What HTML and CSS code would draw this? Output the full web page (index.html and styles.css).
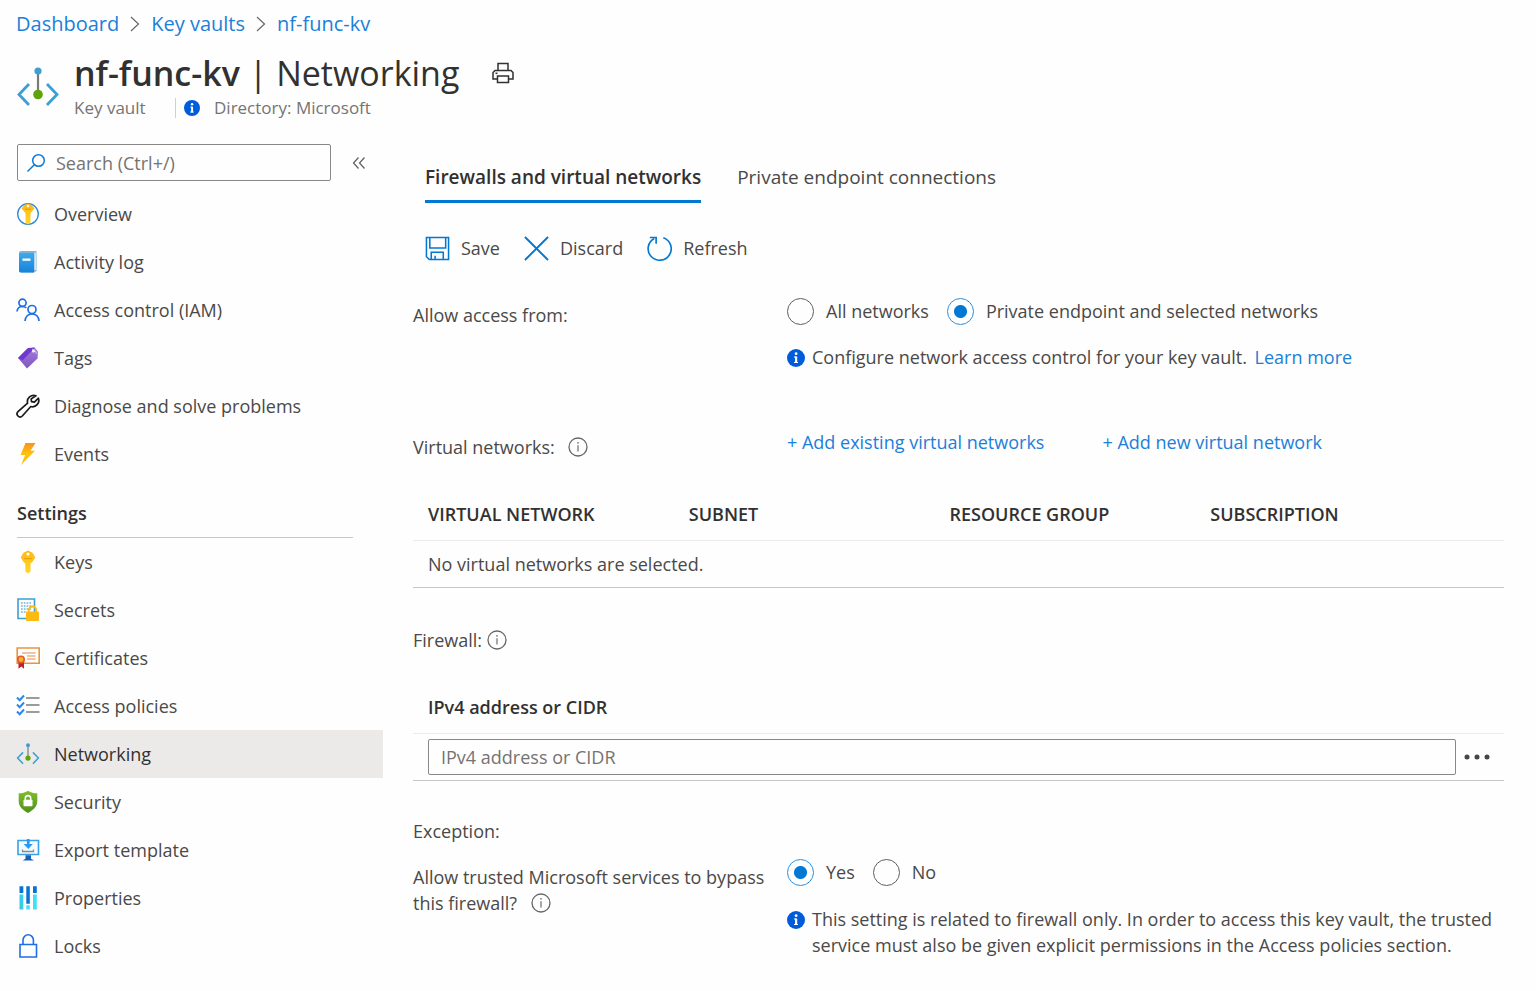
FILE: index.html
```html
<!DOCTYPE html>
<html lang="en">
<head>
    <meta charset="UTF-8">
    <meta name="viewport" content="width=device-width, initial-scale=1.0">
    <title>nf-func-kv | Networking</title>
    <link rel="stylesheet" href="styles.css">
</head>
<body>
    <!-- Shared icons -->
    <svg class="sprite" aria-hidden="true">
        <defs>
            <linearGradient id="gold" x1="0" y1="0" x2="0" y2="1">
                <stop offset="0" stop-color="#ffb60f"/>
                <stop offset="1" stop-color="#ffd92b"/>
            </linearGradient>
            <linearGradient id="book" x1="0" y1="0" x2="0" y2="1">
                <stop offset="0" stop-color="#3fa9ee"/>
                <stop offset="1" stop-color="#1583d8"/>
            </linearGradient>
            <linearGradient id="tag" x1="0" y1="0" x2="0" y2="1">
                <stop offset="0" stop-color="#a67ae0"/>
                <stop offset="1" stop-color="#7f56bd"/>
            </linearGradient>
            <linearGradient id="bolt" x1="0" y1="0" x2="0" y2="1">
                <stop offset="0" stop-color="#f7931e"/>
                <stop offset="0.5" stop-color="#ffc20e"/>
                <stop offset="1" stop-color="#ffb81c"/>
            </linearGradient>
            <linearGradient id="shield" x1="0" y1="0" x2="0" y2="1">
                <stop offset="0" stop-color="#7fbf2a"/>
                <stop offset="1" stop-color="#4f8f1c"/>
            </linearGradient>
        </defs>
        <symbol id="i-net" viewBox="0 0 44 42">
            <path d="M13 18 3 28.500 13 39M31 18 41 28.500 31 39" fill="none" stroke="#3e9fd3" stroke-width="2.800"/>
            <path d="M22 6v20" stroke="#7a7a7a" stroke-width="2.200"/>
            <circle cx="22" cy="5" r="3.600" fill="#3e9fd3"/>
            <circle cx="22" cy="28.500" r="4.800" fill="#5ea30a"/>
        </symbol>
        <symbol id="i-info" viewBox="0 0 18 18">
            <circle cx="9" cy="9" r="9" fill="#015cda"/>
            <path d="M8 7.500h2.200V14H8z" fill="#fff"/>
            <path d="M7 7.500h2v1H7zM7 13h4v1H7z" fill="#fff"/>
            <circle cx="9.100" cy="4.700" r="1.400" fill="#fff"/>
        </symbol>
        <symbol id="i-hint" viewBox="0 0 20 20">
            <circle cx="10" cy="10" r="9" fill="none" stroke="#666" stroke-width="1.300"/>
            <path d="M10 8.300v6.200" stroke="#777" stroke-width="1.300"/>
            <circle cx="10" cy="5.800" r="0.900" fill="#777"/>
        </symbol>
    </svg>

    <header class="page-header">
        <nav class="breadcrumb">
            <a href="#">Dashboard</a>
            <svg class="crumb-arrow" viewBox="0 0 10 16"><path d="M1 1l7.500 7L1 15" fill="none" stroke="#666" stroke-width="1.200"/></svg>
            <a href="#">Key vaults</a>
            <svg class="crumb-arrow" viewBox="0 0 10 16"><path d="M1 1l7.500 7L1 15" fill="none" stroke="#666" stroke-width="1.200"/></svg>
            <a href="#">nf-func-kv</a>
        </nav>
        <div class="title-row">
            <svg class="title-icon"><use href="#i-net"/></svg>
            <div class="title-text">
                <div class="title-line">
                    <h1><strong>nf-func-kv</strong> | Networking</h1>
                    <button class="print-btn" aria-label="Print">
                        <svg viewBox="0 0 24 24" fill="none" stroke="#323130" stroke-width="1.500">
                            <path d="M7 9.500V2.500h10v7M6.500 18H2v-6.500l2-2h16l2 2V18h-4.500M6.500 15h11v6.500h-11z"/>
                            <path d="M4.500 12.300h2"/>
                        </svg>
                    </button>
                </div>
                <div class="subtitle">
                    <span class="kind">Key vault</span>
                    <svg class="info"><use href="#i-info"/></svg>
                    <span>Directory: Microsoft</span>
                </div>
            </div>
        </div>
    </header>

    <div class="layout">
        <aside class="sidebar">
            <div class="search-row">
                <div class="search">
                    <svg viewBox="0 0 20 20" fill="none" stroke="#0f7bd6" stroke-width="1.500">
                        <circle cx="12.500" cy="7.500" r="5.800"/>
                        <path d="M8.300 11.700 1.500 18.500"/>
                    </svg>
                    <input type="text" placeholder="Search (Ctrl+/)" aria-label="Search menu">
                </div>
                <button class="collapse-btn" aria-label="Collapse menu">
                    <svg viewBox="0 0 14 14" fill="none" stroke="#605e5c" stroke-width="1.200"><path d="M6.500 1.500 1.500 7l5 5.500M12.500 1.500 7.500 7l5 5.500"/></svg>
                </button>
            </div>

            <nav>
                <ul class="menu">
                    <li><a href="#">
                        <svg viewBox="0 0 24 24">
                            <circle cx="12" cy="12" r="10.300" fill="#fff" stroke="#2b88d8" stroke-width="1.300"/>
                            <path d="M12 1.500 15.500 3 18.500 6.500 15.500 10 14.500 11v9.500L12 22.500 9.500 20.500V11L8.500 10 5.500 6.500 8.500 3z" fill="url(#gold)"/>
                            <circle cx="12" cy="4" r="1.200" fill="#fff"/>
                            <path d="M9 7.200h6" stroke="#e89a00"/>
                        </svg>Overview</a></li>
                    <li><a href="#">
                        <svg viewBox="0 0 24 24">
                            <path d="M5 1h15.500v20L18 22.500H5a2 2 0 0 1-2-2V3a2 2 0 0 1 2-2z" fill="#7fb4da"/>
                            <path d="M18.500 2.500h1.300V20h-1.300z" fill="#e8f3fa"/>
                            <path d="M4.500 3H18v19.500H5a2 2 0 0 1-2-2V3.500z" fill="url(#book)"/>
                            <path d="M6.500 8.500h8v2.300h-8z" fill="#fff"/>
                        </svg>Activity log</a></li>
                    <li><a href="#">
                        <svg viewBox="0 0 24 24" fill="none" stroke="#1f6fe5" stroke-width="1.700">
                            <circle cx="6.500" cy="4.800" r="3.600"/>
                            <path d="M1 13.500c.3-3 2.500-5 5.500-5 1.500 0 2.800.5 3.800 1.400"/>
                            <circle cx="16" cy="11.500" r="4"/>
                            <path d="M9 23c.5-4.300 3-7 7-7s6.600 2.700 7 7"/>
                        </svg>Access control (IAM)</a></li>
                    <li><a href="#">
                        <svg viewBox="0 0 24 24">
                            <path d="M2 12 11.500 2.500 18.500 1.500l3.500 4-.5 7L11 22.500z" fill="url(#tag)"/>
                            <path d="M2 12 12 2 19 1.500 6.500 14.500z" fill="#7138cf"/>
                            <circle cx="17.500" cy="5" r="1.500" fill="#fff"/>
                            <path d="M16 3.500c2-.5 4.500 1.500 4.200 4.500" fill="none" stroke="#d9c6f2"/>
                        </svg>Tags</a></li>
                    <li><a href="#">
                        <svg viewBox="0 0 24 24" fill="none" stroke="#1b1a19" stroke-width="1.700" stroke-linejoin="round">
                            <path d="M20 1.800a6.300 6.300 0 0 0-8.400 7.400L2 17.700a3 3 0 0 0 4.300 4.300l8.500-9.500a6.300 6.300 0 0 0 7.600-8.300l-4 3.900-2.900-.5-.3-2.700z"/>
                        </svg>Diagnose and solve problems</a></li>
                    <li><a href="#">
                        <svg viewBox="0 0 24 24">
                            <path d="M9.500 1H19.500L14.500 8.700H19L5 23 9.200 13H4.500z" fill="url(#bolt)"/>
                        </svg>Events</a></li>
                </ul>

                <h2 class="menu-heading">Settings</h2>
                <ul class="menu">
                    <li><a href="#">
                        <svg viewBox="0 0 24 24">
                            <path d="M12 .5 16.500 2.800 19.300 7.500 16.500 12 14.500 13.500v8L12 23.500 9.300 21.500v-8L7.500 12 4.700 7.500 7.500 2.800z" fill="url(#gold)"/>
                            <circle cx="12" cy="4" r="1.600" fill="#fff"/>
                            <path d="M8 8.700h8" stroke="#e89a00"/>
                        </svg>Keys</a></li>
                    <li><a href="#">
                        <svg viewBox="0 0 24 24">
                            <path d="M2 1h16.500v19.500H2z" fill="#fff" stroke="#3e9fd3" stroke-width="1.600"/>
                            <path d="M5 5h11M5 8h11M5 11h11M5 14h5.500" stroke="#6db5dd" stroke-width="1.600" stroke-dasharray="1.700 1.100"/>
                            <path d="M12.800 14v-1.800a3.700 3.700 0 0 1 7.400 0V14" fill="none" stroke="#fdb913" stroke-width="1.900"/>
                            <rect x="10" y="13.500" width="13" height="9.500" rx="1" fill="#fdb913"/>
                        </svg>Secrets</a></li>
                    <li><a href="#">
                        <svg viewBox="0 0 24 24">
                            <path d="M1.200 2h22v15.300h-22z" fill="#fff" stroke="#ea953c" stroke-width="1.600"/>
                            <path d="M6 7h13.500M11 10h8.500M11 13h8.500" stroke="#e88a48" stroke-width="1.200"/>
                            <path d="M2.500 15h5.500v7.800l-2.700-2.300-2.800 2.300z" fill="#c0202a"/>
                            <circle cx="5" cy="13.500" r="4" fill="#e4572e"/>
                            <circle cx="5" cy="13.500" r="2.400" fill="#f7b32b"/>
                        </svg>Certificates</a></li>
                    <li><a href="#">
                        <svg viewBox="0 0 24 24" fill="none">
                            <path d="M10 4H23.500M10 11H23.500M10 18H23.500" stroke="#9b9b9b" stroke-width="2"/>
                            <path d="M1 3.500l2.700 2.700L8 1.500M1 10.500l2.700 2.700L8 8.500M1 17.500l2.700 2.700L8 15.500" stroke="#2b88e8" stroke-width="2"/>
                        </svg>Access policies</a></li>
                    <li><a href="#" class="active" aria-current="page">
                        <svg><use href="#i-net"/></svg>Networking</a></li>
                    <li><a href="#">
                        <svg viewBox="0 0 24 24">
                            <path d="M12 .8c3 2 6 2.500 9.300 2.500v8c0 5.500-4.500 9.200-9.300 11.700-4.800-2.500-9.300-6.200-9.300-11.700v-8c3.300 0 6.300-.5 9.300-2.500z" fill="url(#shield)"/>
                            <path d="M9.300 10.500V8.300a2.700 2.700 0 0 1 5.400 0v2.200" fill="none" stroke="#fff" stroke-width="1.600"/>
                            <rect x="7.500" y="9.800" width="9" height="6.500" rx=".8" fill="#fff"/>
                        </svg>Security</a></li>
                    <li><a href="#">
                        <svg viewBox="0 0 24 24">
                            <path d="M2 2.500h20.500v14H2z" fill="#f4fbff" stroke="#3aa0e8" stroke-width="1.600"/>
                            <path d="M6.500 11.500v2h11v-2" fill="none" stroke="#8a8a8a" stroke-width="1.300"/>
                            <path d="M10.900 1h2.700v5h3.200l-4.500 5-4.600-5h3.200z" fill="#2899f5"/>
                            <path d="M9.500 17.300h5.500v3.500l3 1.700H6.700l2.800-1.700z" fill="#1d5fb0"/>
                        </svg>Export template</a></li>
                    <li><a href="#">
                        <svg viewBox="0 0 24 24">
                            <path d="M3.500 8.500h3.800v15H3.500z" fill="#36cbe8"/>
                            <path d="M3.500.2h3.800V7H3.500zM10.300.2h3.500v17.500h-3.500zM17 .2h3.800V7H17z" fill="#0a72d0"/>
                            <path d="M10.300 19.300h3.500v4.200h-3.500zM17 8.500h3.800v15H17z" fill="#42e0f7"/>
                        </svg>Properties</a></li>
                    <li><a href="#">
                        <svg viewBox="0 0 24 24" fill="none" stroke="#1f6fe5" stroke-width="1.600">
                            <path d="M4 10.500h16.500V23H4z"/>
                            <path d="M7 10.500V6a5.200 5.200 0 0 1 10.400 0v4.500"/>
                        </svg>Locks</a></li>
                </ul>
            </nav>
        </aside>

        <main class="content">
            <div class="tabs" role="tablist">
                <button class="tab selected" role="tab" aria-selected="true">Firewalls and virtual networks</button>
                <button class="tab" role="tab" aria-selected="false">Private endpoint connections</button>
            </div>

            <div class="toolbar">
                <button>
                    <svg viewBox="0 0 26 26" fill="none" stroke="#0078d4" stroke-width="1.600">
                        <path d="M1.500 1.500h23v23H4.500l-3-3z"/>
                        <path d="M5 1.500v11h16.500v-11M6.500 24.500v-7.500h12.500v7.500M10.500 24.500v-4"/>
                    </svg>Save</button>
                <button>
                    <svg viewBox="0 0 26 26" fill="none" stroke="#0078d4" stroke-width="2"><path d="M1 1l24 24M25 1 1 25"/></svg>Discard</button>
                <button>
                    <svg viewBox="0 0 26 26" fill="none" stroke="#0078d4" stroke-width="1.700">
                        <path d="M17 1.800a12 12 0 1 1-9.500.8"/>
                        <path d="M3 1.500h6.500V8"/>
                    </svg>Refresh</button>
            </div>

            <section class="field access">
                <div class="field-label" id="access-label">Allow access from:</div>
                <div>
                    <div class="radios" role="radiogroup" aria-labelledby="access-label">
                        <label><input type="radio" name="access">All networks</label>
                        <label><input type="radio" name="access" checked>Private endpoint and selected networks</label>
                    </div>
                    <div class="note">
                        <svg class="info"><use href="#i-info"/></svg>
                        <p>Configure network access control for your key vault. <a href="#">Learn more</a></p>
                    </div>
                </div>
            </section>

            <section class="field vnets">
                <div class="field-label">Virtual networks: <svg class="hint wide"><use href="#i-hint"/></svg></div>
                <div class="add-links">
                    <a href="#">+ Add existing virtual networks</a>
                    <a href="#">+ Add new virtual network</a>
                </div>
            </section>

            <table class="grid">
                <thead>
                    <tr>
                        <th>VIRTUAL NETWORK</th>
                        <th>SUBNET</th>
                        <th>RESOURCE GROUP</th>
                        <th>SUBSCRIPTION</th>
                        <th class="actions"></th>
                    </tr>
                </thead>
                <tbody>
                    <tr><td colspan="5">No virtual networks are selected.</td></tr>
                </tbody>
            </table>

            <div class="field-label firewall">Firewall: <svg class="hint"><use href="#i-hint"/></svg></div>

            <table class="grid">
                <thead>
                    <tr>
                        <th id="ip-head">IPv4 address or CIDR</th>
                        <th class="actions"></th>
                    </tr>
                </thead>
                <tbody>
                    <tr>
                        <td><input class="ip-input" type="text" placeholder="IPv4 address or CIDR" aria-labelledby="ip-head"></td>
                        <td class="actions">
                            <button class="more-btn" aria-label="More">
                                <svg viewBox="0 0 26 6" fill="#484644"><circle cx="3" cy="3" r="2.500"/><circle cx="13" cy="3" r="2.500"/><circle cx="23" cy="3" r="2.500"/></svg>
                            </button>
                        </td>
                    </tr>
                </tbody>
            </table>

            <div class="field-label exception">Exception:</div>

            <section class="field trusted">
                <div class="field-label" id="trusted-label">Allow trusted Microsoft services to bypass this firewall? <svg class="hint wide"><use href="#i-hint"/></svg></div>
                <div>
                    <div class="radios" role="radiogroup" aria-labelledby="trusted-label">
                        <label><input type="radio" name="trusted" checked>Yes</label>
                        <label><input type="radio" name="trusted">No</label>
                    </div>
                    <div class="note">
                        <svg class="info"><use href="#i-info"/></svg>
                        <p>This setting is related to firewall only. In order to access this key vault, the trusted service must also be given explicit permissions in the Access policies section.</p>
                    </div>
                </div>
            </section>
        </main>
    </div>
</body>
</html>
```
FILE: styles.css
```css
:root {
    --text: #4a4948;
    --text-strong: #323130;
    --text-muted: #767472;
    --link: #1a80d9;
    --accent: #0078d4;
    --line: #c8c6c4;
    --line-light: #edebe9;
    --active-bg: #ebeae8;
}

* {
    box-sizing: border-box;
}

body {
    margin: 0;
    background: #fefefe;
    color: var(--text);
    font-family: "Open Sans", "Noto Sans", sans-serif;
    font-size: 18px;
    line-height: 26px;
}

a {
    color: var(--link);
    text-decoration: none;
}

button {
    padding: 0;
    border: 0;
    background: none;
    color: inherit;
    font: inherit;
    cursor: pointer;
}

svg {
    flex: none;
}

h1, h2, p, ul {
    margin: 0;
    padding: 0;
}

.sprite {
    position: absolute;
    width: 0;
    height: 0;
}

.info {
    width: 18px;
    height: 18px;
}

.hint {
    width: 20px;
    height: 20px;
    vertical-align: -3px;
}

.hint.wide {
    margin-left: 9px;
}

/* Header */
.page-header {
    padding: 11px 16px 0;
}

.breadcrumb {
    display: flex;
    align-items: center;
    gap: 11px;
    font-size: 20px;
}

.crumb-arrow {
    width: 10px;
    height: 16px;
}

.title-row {
    display: flex;
    gap: 14px;
    padding-top: 14px;
}

.title-icon {
    width: 44px;
    height: 42px;
    margin-top: 15px;
}

.title-line {
    display: flex;
    align-items: center;
    gap: 32px;
}

h1 {
    color: var(--text-strong);
    font-size: 34px;
    font-weight: 400;
    line-height: 44px;
}

h1 strong {
    font-weight: 600;
}

.print-btn svg {
    display: block;
    width: 24px;
    height: 24px;
}

.subtitle {
    display: flex;
    align-items: center;
    line-height: 26px;
    font-size: 17px;
    color: var(--text-muted);
}

.subtitle .kind {
    width: 102px;
    line-height: 20px;
    border-right: 1px solid #d2d0ce;
}

.subtitle .info {
    width: 16px;
    height: 16px;
    margin: 0 14px 0 8px;
}

/* Sidebar */
.layout {
    display: flex;
}

.sidebar {
    flex: none;
    width: 383px;
    padding-top: 23px;
}

.search-row {
    display: flex;
    align-items: center;
    padding-left: 17px;
    margin-bottom: 9px;
}

.search {
    display: flex;
    align-items: center;
    gap: 8px;
    width: 314px;
    height: 37px;
    padding: 0 8px;
    border: 1px solid #8a8886;
    border-radius: 2px;
}

.search svg {
    width: 20px;
    height: 20px;
}

input[type="text"] {
    min-width: 0;
    border: 0;
    outline: 0;
    background: none;
    color: var(--text);
    font: inherit;
}

.search input {
    flex: 1;
}

::placeholder {
    color: #757371;
    opacity: 1;
}

.collapse-btn {
    margin-left: 21px;
}

.collapse-btn svg {
    display: block;
    width: 14px;
    height: 14px;
}

.menu {
    list-style: none;
}

.menu a {
    display: flex;
    align-items: center;
    gap: 14px;
    height: 48px;
    padding-left: 16px;
    color: var(--text);
}

.menu svg {
    width: 24px;
    height: 24px;
}

.menu .active {
    background: var(--active-bg);
    color: var(--text-strong);
}

.menu-heading {
    margin: 0 30px 0 17px;
    padding: 22px 0 11px;
    border-bottom: 1px solid var(--line);
    color: var(--text-strong);
    font-size: 18px;
    font-weight: 600;
}

/* Content */
.content {
    flex: 1;
    min-width: 0;
    padding: 43px 32px 0 30px;
}

.tabs {
    display: flex;
    gap: 36px;
    padding-left: 12px;
    font-size: 19px;
}

.tab {
    padding-bottom: 10px;
    border-bottom: 3px solid transparent;
}

.tab.selected {
    border-color: var(--accent);
    color: var(--text-strong);
    font-weight: 600;
}

.toolbar {
    display: flex;
    gap: 24px;
    padding: 32px 12px 0;
}

.toolbar button {
    display: flex;
    align-items: center;
    gap: 11px;
}

.toolbar svg {
    width: 25px;
    height: 25px;
}

.field {
    display: grid;
    grid-template-columns: 374px 1fr;
}

.radios {
    display: flex;
    gap: 18px;
    line-height: 28px;
}

.radios label {
    display: flex;
    align-items: center;
    gap: 12px;
}

input[type="radio"] {
    appearance: none;
    width: 27px;
    height: 27px;
    margin: 0;
    border: 1px solid #605e5c;
    border-radius: 50%;
}

input[type="radio"]:checked {
    border-color: #2b8fe0;
    background: radial-gradient(circle, var(--accent) 6px, transparent 7px);
}

.note {
    display: flex;
    gap: 7px;
}

.note .info {
    margin-top: 5px;
}

.access {
    padding-top: 36px;
}

.access .field-label {
    padding-top: 5px;
}

.access .note {
    padding-top: 19px;
}

.note a {
    margin-left: 3px;
}

.vnets {
    padding-top: 59px;
}

.vnets .field-label {
    padding-top: 5px;
}

.add-links {
    display: flex;
    gap: 58px;
}

.grid {
    width: 100%;
    table-layout: fixed;
    border-collapse: collapse;
    text-align: left;
}

.grid th {
    height: 52px;
    padding: 0 0 0 15px;
    border-bottom: 1px solid var(--line-light);
    color: var(--text-strong);
    font-weight: 600;
}

.grid td {
    height: 47px;
    padding: 0 0 0 15px;
    border-bottom: 1px solid var(--line);
}

.grid .actions {
    width: 48px;
    padding: 0;
}

.vnets + .grid {
    margin-top: 28px;
}

.firewall {
    padding-top: 39px;
    padding-bottom: 29px;
}

.ip-input {
    display: block;
    width: 100%;
    height: 36px;
    padding: 0 12px;
}

input.ip-input {
    border: 1px solid #8a8886;
    border-radius: 2px;
}

.more-btn {
    display: block;
    margin-left: 8px;
}

.more-btn svg {
    display: block;
    width: 26px;
    height: 6px;
}

.exception {
    padding-top: 37px;
}

.trusted {
    padding-top: 14px;
}

.trusted .field-label {
    padding: 6px 12px 0 0;
}

.trusted .note {
    padding-top: 20px;
}
```
